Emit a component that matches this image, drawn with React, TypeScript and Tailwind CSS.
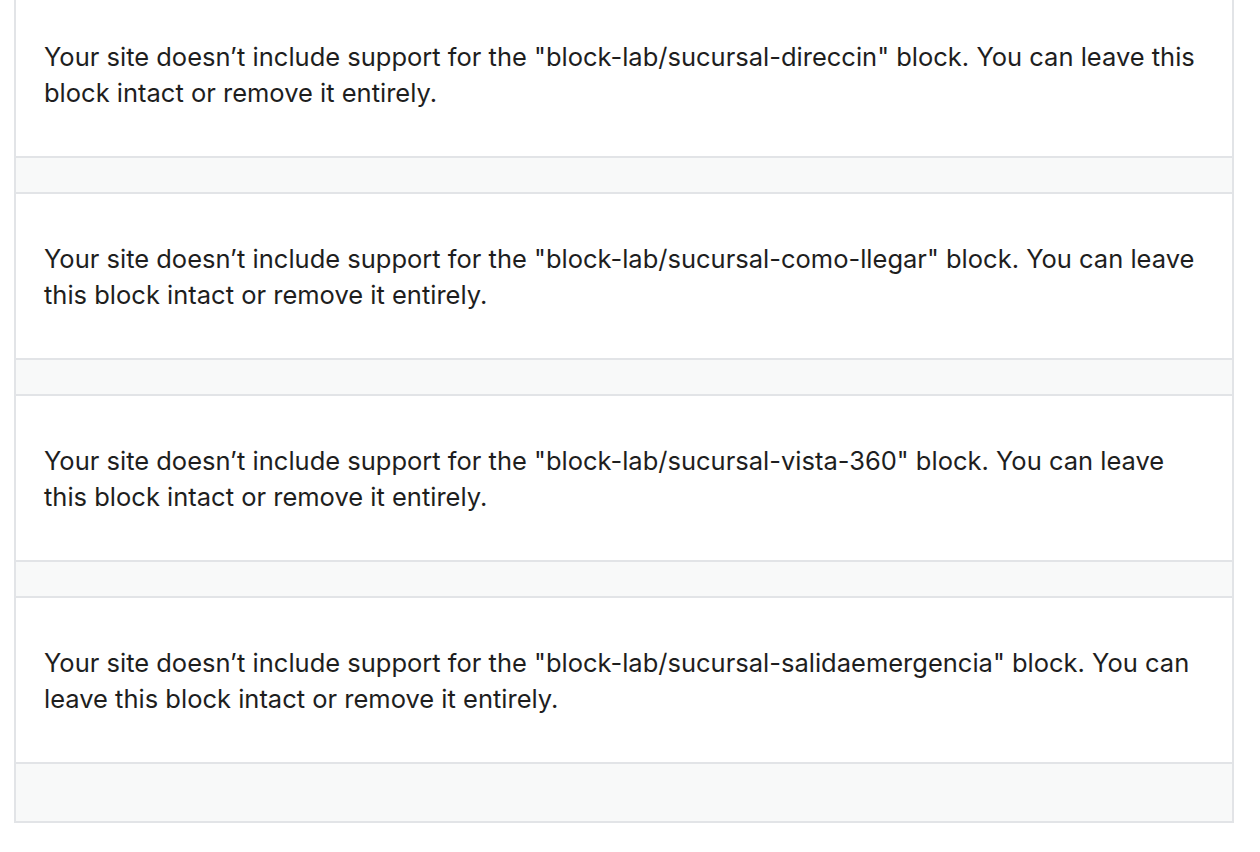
const blocks = [
  "block-lab/sucursal-direccin",
  "block-lab/sucursal-como-llegar",
  "block-lab/sucursal-vista-360",
  "block-lab/sucursal-salidaemergencia",
];

export default function App() {
  return (
    <div className="min-h-screen bg-white font-['Inter',sans-serif] text-[#1e1e1e]">
      <div className="-mt-[10px] ml-[14px] w-[1220px] border-2 border-[#e2e4e7]">
        {blocks.map((name, i) => (
          <div key={name}>
            <div className="border-b-2 border-[#e2e4e7] bg-white px-[28px] pt-[47px] pb-[45px]">
              <p className="text-[25.5px] leading-[36px]">
                Your site doesn’t include support for the "{name}" block. You
                can leave this block intact or remove it entirely.
              </p>
            </div>
            {i < blocks.length - 1 ? (
              <div className="h-[36px] border-b-2 border-[#e2e4e7] bg-[#f8f9f9]" />
            ) : (
              <div className="h-[57px] bg-[#f8f9f9]" />
            )}
          </div>
        ))}
      </div>
    </div>
  );
}
